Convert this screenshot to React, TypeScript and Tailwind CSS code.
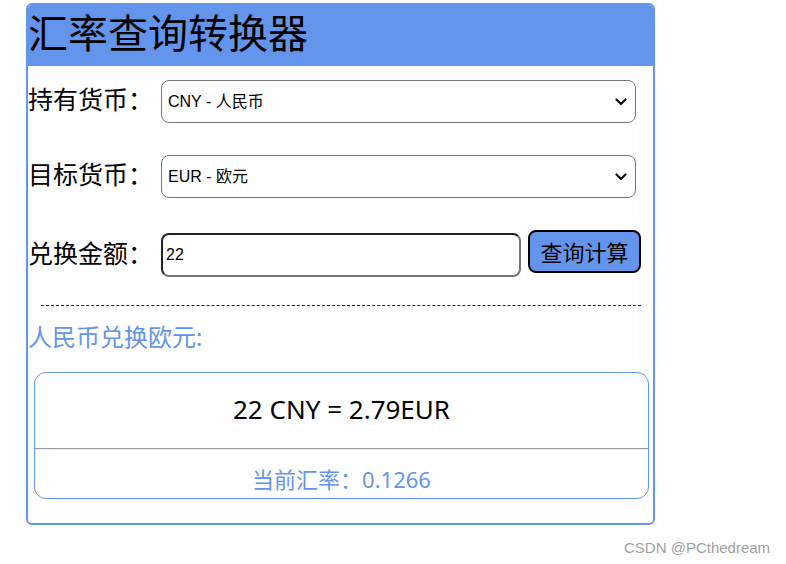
import React from "react";

const cjk = { fontFamily: '"Noto Sans", "Noto Sans CJK SC", sans-serif' };
const selFont = { fontFamily: '"Liberation Sans", "Noto Sans CJK SC", sans-serif' };

function Chevron() {
  return (
    <svg className="absolute right-[9px] top-1/2 -translate-y-1/2 pointer-events-none" width="12" height="8" viewBox="0 0 12 8">
      <path d="M1.5 1.5 L6 6 L10.5 1.5" fill="none" stroke="#111" strokeWidth="2.2" strokeLinecap="round" strokeLinejoin="round" />
    </svg>
  );
}

function SelectBox({ value }: { value: string }) {
  return (
    <div className="relative w-[475px] h-[43px]">
      <select
        defaultValue={value}
        className="appearance-none w-full h-full border border-[#767676] rounded-[8px] bg-white pl-[6px] text-[16px] text-black outline-none"
        style={selFont}
      >
        <option value={value}>{value}</option>
      </select>
      <Chevron />
    </div>
  );
}

export default function App() {
  return (
    <div className="relative min-h-[564px] bg-white pl-[26px] pt-[3px]" style={cjk}>
      <div className="w-[629px] h-[522px] border-2 border-[#6495ED] rounded-[6px] overflow-hidden">
        <div className="h-[61px] bg-[#6495ED] text-[40px] leading-[56px] text-black">汇率查询转换器</div>

        <div className="mt-[14px] flex items-center h-[43px]">
          <div className="w-[133px] pb-[5px] text-[25px] leading-[32px] text-black">持有货币：</div>
          <SelectBox value="CNY - 人民币" />
        </div>

        <div className="mt-[32px] flex items-center h-[43px]">
          <div className="w-[133px] pb-[5px] text-[25px] leading-[32px] text-black">目标货币：</div>
          <SelectBox value="EUR - 欧元" />
        </div>

        <div className="mt-[32px] flex items-start">
          <div className="w-[133px] h-[50px] pb-[5px] flex items-center text-[25px] leading-[32px] text-black">兑换金额：</div>
          <input
            defaultValue="22"
            className="mt-[3px] w-[360px] h-[44px] border-2 border-t-[#222] border-l-[#222] border-b-[#767676] border-r-[#767676] rounded-[8px] pl-[3px] text-[16px] text-black outline-none"
            style={selFont}
          />
          <button className="ml-[7px] w-[113px] h-[43px] bg-[#6495ED] border-2 border-black rounded-[8px] text-[22px] leading-[30px] text-black">
            查询计算
          </button>
        </div>

        <div className="mt-[25px] ml-[13px] w-[600px] border-t border-dashed border-[#0000ff]" />

        <div className="mt-[15px] text-[24px] leading-[32px] text-[#6495ED]">人民币兑换欧元:</div>

        <div className="mt-[19px] ml-[6px] w-[615px] h-[127px] border border-[#6495ED] rounded-[12px] overflow-hidden">
          <div className="h-[75px] pt-[20px] text-center text-[26px] leading-[32px] text-black">22 CNY = 2.79EUR</div>
          <div className="border-t border-t-[#9a9a9a] border-b border-b-[#eeeeee]" />
          <div className="pt-[14px] text-center text-[22px] leading-[30px] text-[#6495ED]">当前汇率：0.1266</div>
        </div>
      </div>

      <div className="absolute left-[624px] top-[539px] text-[15px] leading-[18px] text-[#a0a0a0]" style={{ fontFamily: '"Liberation Sans", sans-serif' }}>
        CSDN @PCthedream
      </div>
    </div>
  );
}
